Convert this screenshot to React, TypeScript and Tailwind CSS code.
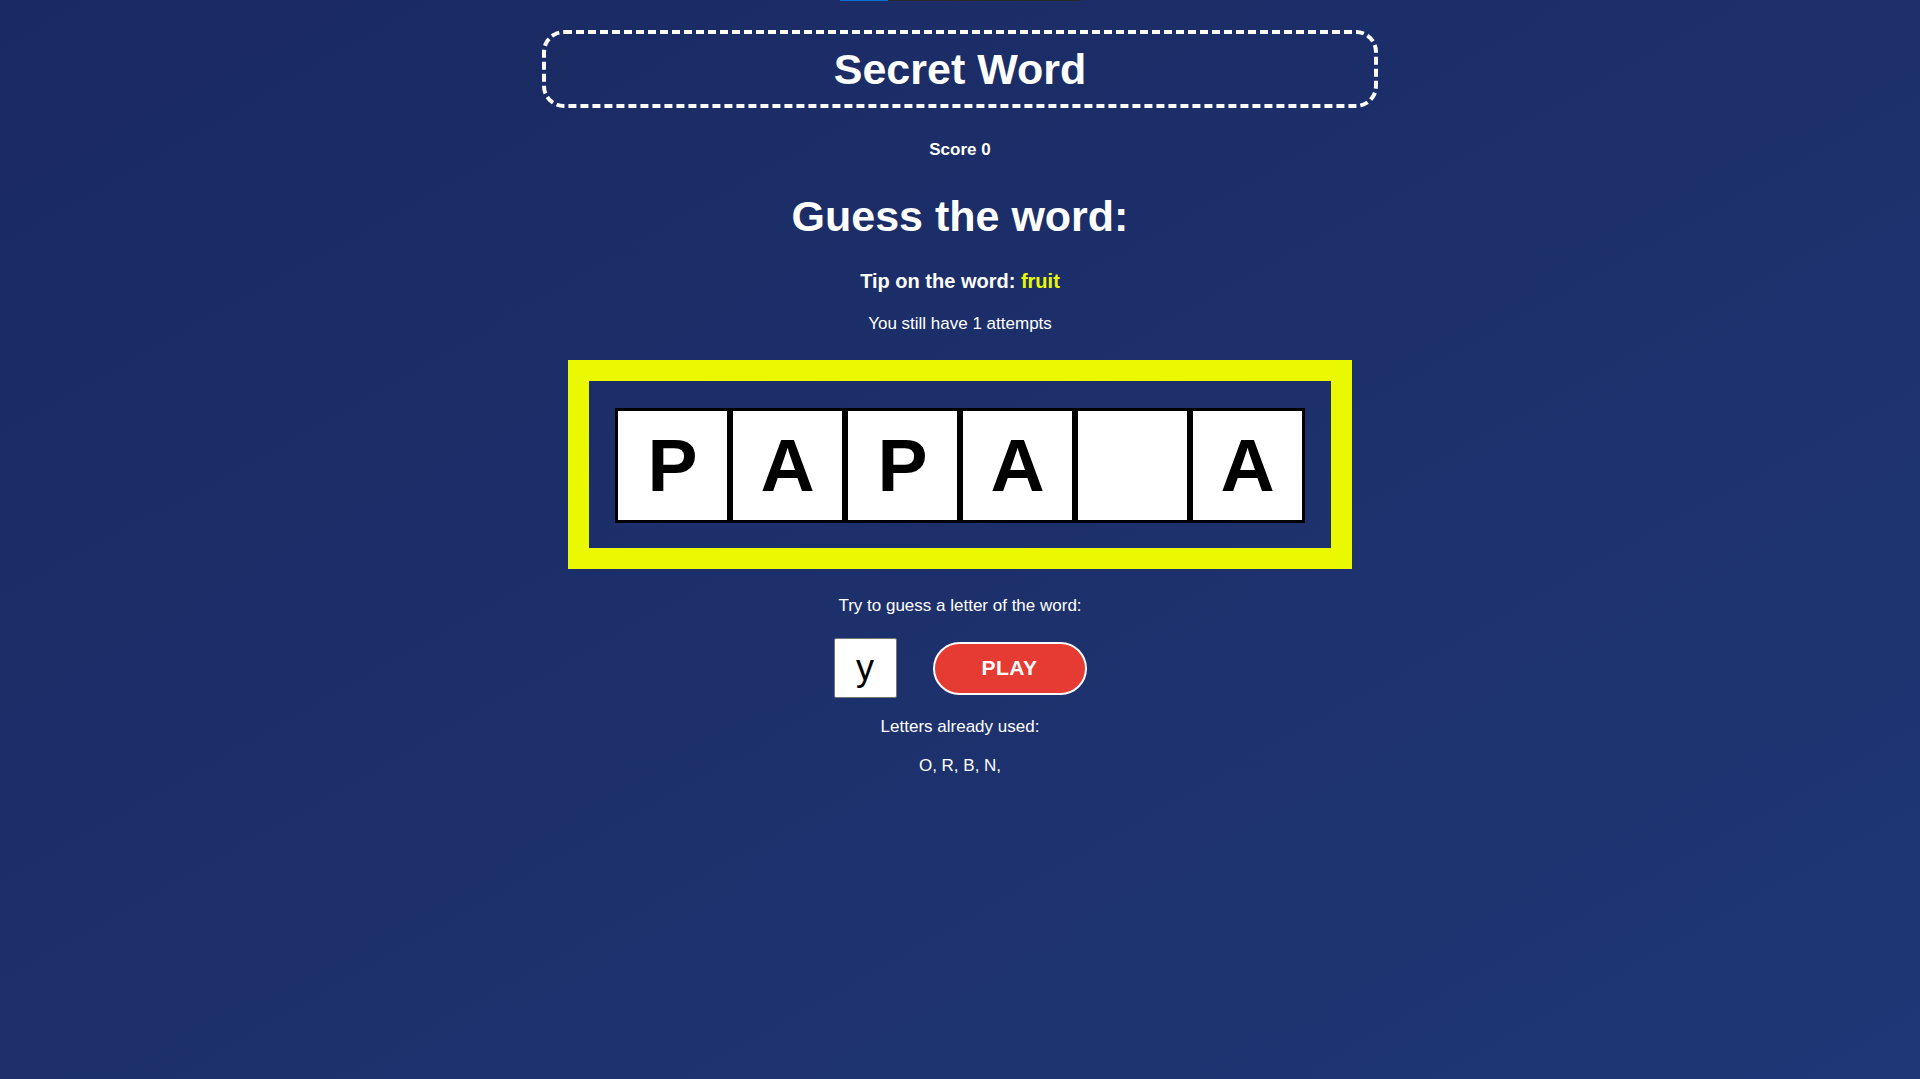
const word = ['P', 'A', 'P', 'A', '', 'A']
const usedLetters = ['O', 'R', 'B', 'N']

function LetterBox({ letter }: { letter: string }) {
  return (
    <div className="w-[115px] h-[115px] bg-white border-[3px] border-black flex items-center justify-center">
      <span className="text-[75px] font-bold leading-[109px] text-black">{letter}</span>
    </div>
  )
}

export default function App() {
  return (
    <div
      className="min-h-screen w-full bg-linear-to-br from-[#1a2961] to-[#1f3776] text-white flex flex-col items-center text-center"
      style={{ fontFamily: '"Liberation Sans", Arial, Helvetica, sans-serif' }}
    >
      <div className="flex w-[241px] h-px">
        <div className="w-[48px] bg-[#0c6fd1]" />
        <div className="flex-1 bg-[#29292d]" />
      </div>

      <div className="mt-[29px] w-[836px] h-[78px] border-4 border-dashed border-white rounded-[22px]">
        <h1 className="text-[43px] font-bold leading-[70px]">Secret Word</h1>
      </div>

      <p className="mt-[32px] text-[17px] font-bold leading-[20px]">Score 0</p>

      <h2 className="mt-[31px] text-[43px] font-bold leading-[50px]">Guess the word:</h2>

      <p className="mt-[28px] text-[20px] font-bold leading-[24px]">
        Tip on the word: <span className="text-[#eaf800]">fruit</span>
      </p>

      <p className="mt-[21px] text-[17px] leading-[20px]">You still have 1 attempts</p>

      <div className="mt-[26px] w-[784px] h-[209px] border-[21px] border-[#ebf900] flex items-center justify-center">
        <div className="flex mt-[2px]">
          {word.map((l, i) => (
            <LetterBox key={i} letter={l} />
          ))}
        </div>
      </div>

      <p className="mt-[27px] text-[17px] leading-[20px]">Try to guess a letter of the word:</p>

      <div className="mt-[22px] flex items-center gap-[36px]">
        <input
          defaultValue="y"
          maxLength={1}
          className="w-[63px] h-[60px] bg-white border border-[#767676] rounded-[2px] text-black text-[36px] text-center outline-none"
        />
        <button className="w-[154px] h-[53px] rounded-full bg-[#e63b33] border-2 border-white text-white text-[21px] font-bold tracking-[0.5px]">
          PLAY
        </button>
      </div>

      <p className="mt-[19px] text-[17px] leading-[20px]">Letters already used:</p>

      <p className="mt-[19px] text-[17px] leading-[20px]">
        {usedLetters.map(l => `${l}, `).join('')}
      </p>
    </div>
  )
}
